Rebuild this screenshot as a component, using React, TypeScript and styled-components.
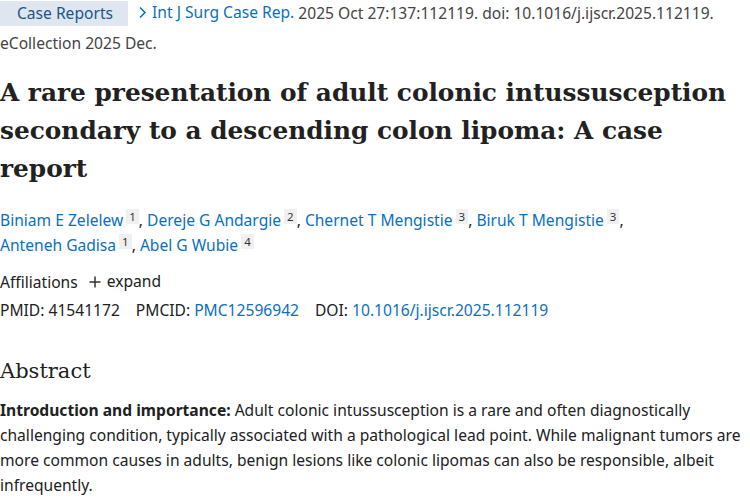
import React from "react";
import styled, { createGlobalStyle } from "styled-components";

const Global = createGlobalStyle`
  html, body { margin: 0; padding: 0; background: #fff; }
  body { font-family: "Noto Sans", "Open Sans", sans-serif; color: #212121; }
`;

const Page = styled.main`
  width: 748px;
  font-size: 15.6px;
  line-height: 25px;
`;

const CiteRow = styled.div`
  line-height: 25px;
  color: #444;
`;

const Tag = styled.span`
  display: inline-block;
  background: #dfe6ef;
  color: #20558a;
  padding: 0 15px 0 17px;
  margin-right: 6px;
  height: 25px;
  line-height: 25px;
`;

const Link = styled.a`
  color: #0b6fc1;
  text-decoration: none;
`;

const Journal = styled(Link)`
  display: inline-flex;
  align-items: center;
  gap: 5px;
`;

const Sub = styled.div`
  margin-top: 5px;
  color: #444;
`;

const Title = styled.h1`
  font-family: "DejaVu Serif", "Liberation Serif", serif;
  font-weight: 700;
  font-size: 24.8px;
  line-height: 38px;
  margin: 18px 0 0;
  color: #212121;
`;

const Authors = styled.div`
  margin-top: 20px;
  line-height: 25px;
`;

const Sup = styled.sup`
  display: inline-block;
  background: #f0f0f0;
  color: #333;
  font-size: 11.5px;
  line-height: 15px;
  padding: 0 3px;
  margin-left: 3px;
  vertical-align: 5px;
`;

const Meta = styled.div`
  margin-top: 11px;
  display: flex;
  flex-direction: column;
  gap: 3px;
`;

const Expand = styled.span`
  margin-left: 11px;
  display: inline-flex;
  align-items: center;
  gap: 6px;
`;

const Ids = styled.div`
  display: flex;
  gap: 16px;
`;

const AbstractHead = styled.h2`
  font-family: "DejaVu Serif", "Liberation Serif", serif;
  font-weight: 400;
  font-size: 21px;
  line-height: 30px;
  margin: 33px 0 0;
  color: #212121;
`;

const Para = styled.p`
  margin: 12px 0 0;
  line-height: 25px;
`;

const Chevron = () => (
  <svg width="9" height="13" viewBox="0 0 9 13" aria-hidden>
    <path d="M2 1.5 L7 6.5 L2 11.5" fill="none" stroke="currentColor" strokeWidth="1.6" />
  </svg>
);

const Plus = () => (
  <svg width="12" height="12" viewBox="0 0 12 12" aria-hidden>
    <path d="M6 0.5 V11.5 M0.5 6 H11.5" stroke="#333" strokeWidth="1.5" />
  </svg>
);

const authors: [string, string][] = [
  ["Biniam E Zelelew", "1"],
  ["Dereje G Andargie", "2"],
  ["Chernet T Mengistie", "3"],
  ["Biruk T Mengistie", "3"],
  ["Anteneh Gadisa", "1"],
  ["Abel G Wubie", "4"],
];

export default function App() {
  return (
    <Page>
      <Global />
      <CiteRow>
        <Tag>Case Reports</Tag>{" "}
        <Journal href="#">
          <Chevron /> Int J Surg Case Rep.
        </Journal>{" "}
        2025 Oct 27:137:112119. doi: 10.1016/j.ijscr.2025.112119.
      </CiteRow>
      <Sub>eCollection 2025 Dec.</Sub>
      <Title>
        A rare presentation of adult colonic intussusception secondary to a descending colon lipoma: A case
        report
      </Title>
      <Authors>
        {authors.map(([n, s], i) => (
          <React.Fragment key={n}>
            <Link href="#">{n}</Link>
            <Sup>{s}</Sup>
            {i < authors.length - 1 ? ", " : ""}
            {i === 3 ? <br /> : null}
          </React.Fragment>
        ))}
      </Authors>
      <Meta>
        <div>
          Affiliations
          <Expand>
            <Plus /> expand
          </Expand>
        </div>
        <Ids>
          <span>PMID: 41541172</span>
          <span>
            PMCID: <Link href="#">PMC12596942</Link>
          </span>
          <span>
            DOI: <Link href="#">10.1016/j.ijscr.2025.112119</Link>
          </span>
        </Ids>
      </Meta>
      <AbstractHead>Abstract</AbstractHead>
      <Para>
        <strong>Introduction and importance:</strong> Adult colonic intussusception is a rare and often
        diagnostically challenging condition, typically associated with a pathological lead point. While
        malignant tumors are more common causes in adults, benign lesions like colonic lipomas can also be
        responsible, albeit infrequently.
      </Para>
    </Page>
  );
}
